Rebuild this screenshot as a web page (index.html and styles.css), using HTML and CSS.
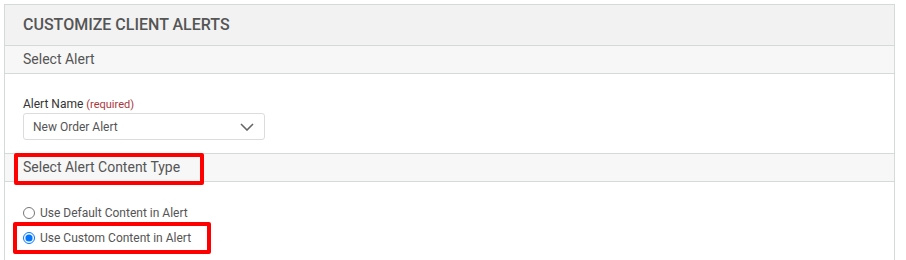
FILE: index.html
```html
<!DOCTYPE html>
<html lang="en">
<head>
  <meta charset="UTF-8">
  <title>Customize Client Alerts</title>
  <link rel="stylesheet" href="styles.css">
</head>
<body>

  <div class="panel">
    <div class="panel-title">CUSTOMIZE CLIENT ALERTS</div>

    <div class="section-head">Select Alert</div>
    <div class="section-body alert-body">
      <label class="field-label" for="alertName">Alert Name <span class="req">(required)</span></label>
      <div class="select-box" id="alertName">
        <span>New Order Alert</span>
        <svg class="chevron" width="14" height="8" viewBox="0 0 14 8">
          <path d="M1 1 L7 7 L13 1" fill="none" stroke="#666" stroke-width="1.6"/>
        </svg>
      </div>
    </div>

    <div class="section-head">
      Select Alert Content Type
      <span class="highlight hl-head"></span>
    </div>
    <div class="section-body radio-body">
      <label class="radio-row">
        <input type="radio" name="contentType"> Use Default Content in Alert
      </label>
      <label class="radio-row">
        <input type="radio" name="contentType" checked> Use Custom Content in Alert
        <span class="highlight hl-radio"></span>
      </label>
    </div>
  </div>

</body>
</html>
```

FILE: styles.css
```css
body {
  margin: 0;
  font-family: Roboto, "Liberation Sans", sans-serif;
  color: #555;
  background: #fff;
}

.panel {
  margin: 4px 11px 0 4px;
  border: 1px solid #d3dbd8;
  border-bottom: none;
  height: 260px;
}

.panel-title {
  height: 40px;
  line-height: 40px;
  padding-left: 18px;
  background: #f2f2f2;
  border-bottom: 1px solid #d3dbd8;
  font-size: 16px;
  font-weight: 500;
  color: #555;
}

.section-head {
  position: relative;
  height: 27px;
  line-height: 27px;
  padding-left: 18px;
  background: #f7f7f7;
  border-bottom: 1px solid #d3dbd8;
  font-size: 14px;
  color: #555;
}

.section-body {
  padding-left: 18px;
}

.alert-body {
  height: 80px;
  border-bottom: 1px solid #d3dbd8;
  padding-top: 23px;
  box-sizing: border-box;
}

.field-label {
  display: block;
  font-size: 12px;
  color: #333;
  line-height: 14px;
}

.req {
  font-size: 11px;
  color: #a9383e;
}

.select-box {
  margin-top: 1px;
  width: 242px;
  height: 27px;
  box-sizing: border-box;
  border: 1px solid #dcdcdc;
  border-radius: 3px;
  display: flex;
  align-items: center;
  justify-content: space-between;
  padding: 0 10px 0 9px;
  font-size: 12px;
  color: #555;
}

.radio-body {
  padding-top: 18px;
}

.radio-row {
  position: relative;
  display: flex;
  align-items: center;
  height: 25px;
  font-size: 12px;
  color: #555;
}

.radio-row input {
  margin: 0 5px 0 0;
  width: 12px;
  height: 12px;
}

/* red annotation boxes */
.highlight {
  position: absolute;
  border: 4px solid #f00;
  border-radius: 2px;
  pointer-events: none;
}

.hl-head {
  left: 9px;
  top: -1px;
  width: 182px;
  height: 24px;
}

.hl-radio {
  left: -10px;
  top: -3px;
  width: 190px;
  height: 24px;
}
```
